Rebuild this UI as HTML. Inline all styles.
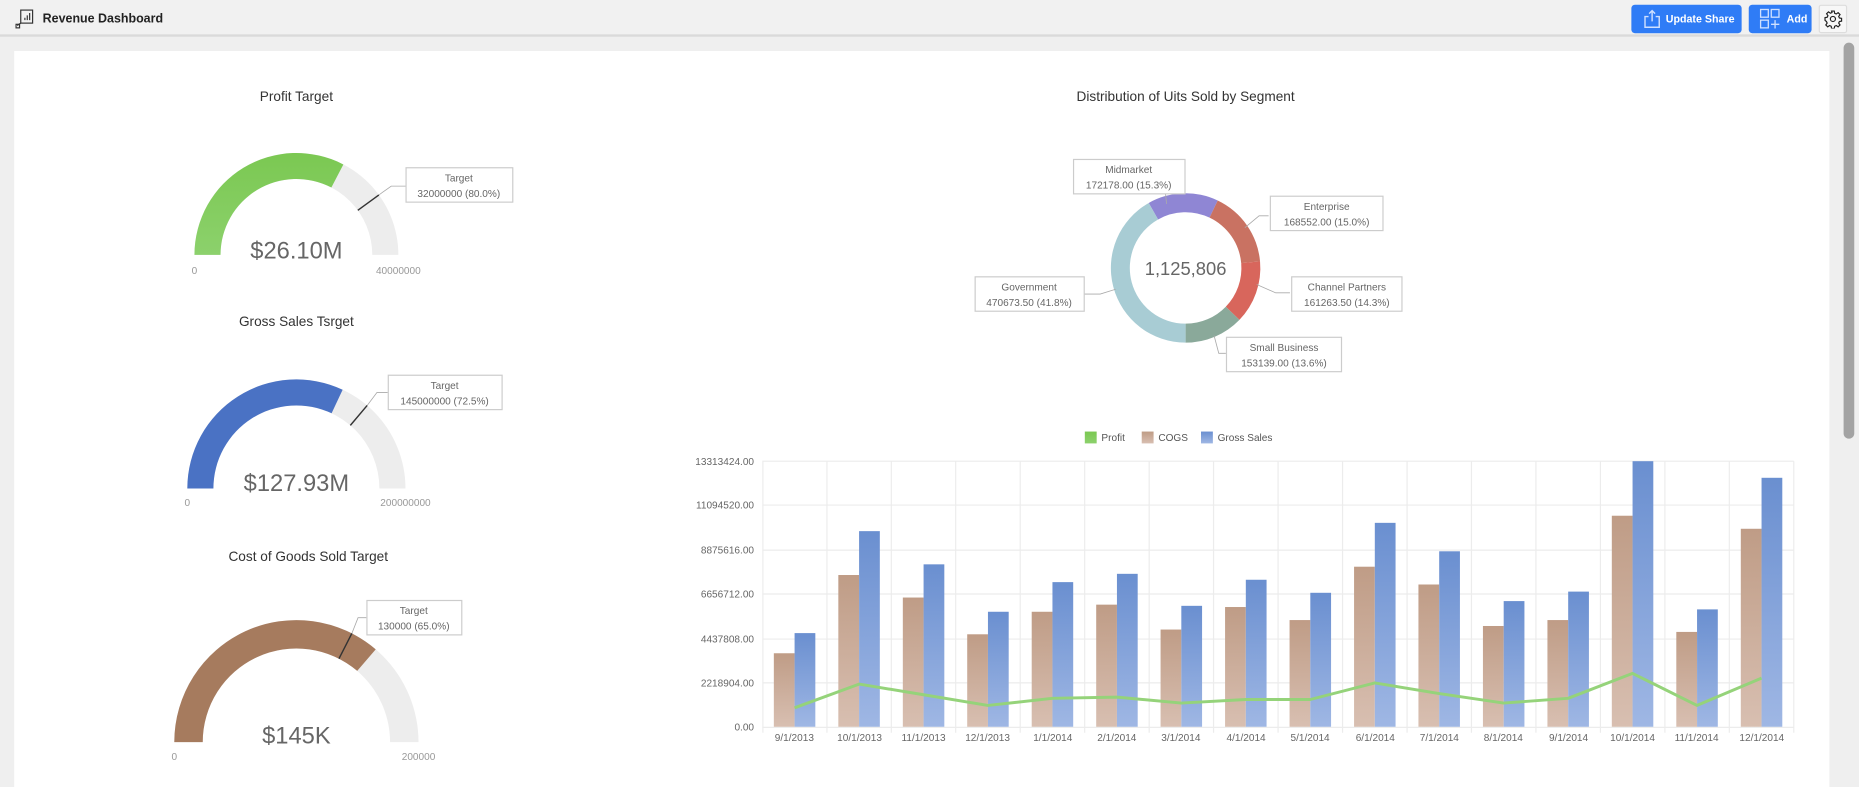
<!DOCTYPE html>
<html><head><meta charset="utf-8"><style>
html,body{margin:0;padding:0;width:1859px;height:787px;overflow:hidden;background:#efefef;font-family:"Liberation Sans",Arial,sans-serif}
#w{position:absolute;left:0;top:0;width:1568px;height:664px;transform:scale(1.18559);transform-origin:0 0;background:#efefef}
#hdr{position:absolute;left:0;top:0;width:1568px;height:31px;background:#f1f1f1;border-bottom:2px solid #dadada;box-sizing:border-box}
#title{position:absolute;left:36px;top:10px;font-size:10.5px;font-weight:bold;color:#222}
.btn{position:absolute;top:4px;height:24px;background:#2f7cf6;border-radius:3px;color:#fff;font-size:9px;font-weight:bold;line-height:24px;box-sizing:border-box;white-space:nowrap}
#panel{position:absolute;left:12px;top:43px;width:1531px;height:621px;background:#fff}
#sb{position:absolute;left:1553px;top:32px;width:13px;height:632px;background:#efefef}
#thumb{position:absolute;left:1555px;top:36px;width:9px;height:334px;background:#a3a3a3;border-radius:5px}
svg text{font-family:"Liberation Sans",Arial,sans-serif}
</style></head><body><div id="w">
<div id="hdr">
<svg style="position:absolute;left:13px;top:8px" width="16" height="16" viewBox="0 0 16 16" fill="none" stroke="#333" stroke-width="1"><rect x="4.5" y="0.5" width="10" height="11"/><path d="M8 9V7M10 9V5M12 9V3"/><path d="M4.5 11.5L1.5 13.5"/><rect x="0.5" y="12.5" width="3" height="3"/></svg>
<div id="title">Revenue Dashboard</div>
<div class="btn" style="left:1376px;width:93px;padding-left:29px">Update Share
<svg style="position:absolute;left:10px;top:4px" width="15" height="16" viewBox="0 0 15 16" fill="none" stroke="#cfe0ff" stroke-width="1.2"><path d="M4.5 6H1.5V15H13.5V6H10.5"/><path d="M7.5 10V1M5 3.5L7.5 1L10 3.5"/></svg></div>
<div class="btn" style="left:1475px;width:53px;padding-left:32px">Add
<svg style="position:absolute;left:9px;top:3px" width="18" height="18" viewBox="0 0 18 18" fill="none" stroke="#cfe0ff" stroke-width="1.1"><rect x="1" y="1" width="6.5" height="6.5"/><rect x="10" y="1" width="6.5" height="6.5"/><rect x="1" y="10" width="6.5" height="6.5"/><path d="M13.2 10V17M9.8 13.5H16.8"/></svg></div>
<div style="position:absolute;left:1534px;top:4px;width:24px;height:24px;border:1px solid #ddd;background:#f7f7f7;box-sizing:border-box;border-radius:2px">
<svg style="position:absolute;left:3px;top:3px" width="16" height="16" viewBox="0 0 24 24" fill="none" stroke="#222" stroke-width="1.5"><circle cx="12" cy="12" r="3.2"/><path d="M10.3 2h3.4l.5 2.8 2 .9 2.4-1.7 2.4 2.4-1.7 2.4.9 2 2.8.5v3.4l-2.8.5-.9 2 1.7 2.4-2.4 2.4-2.4-1.7-2 .9-.5 2.8h-3.4l-.5-2.8-2-.9-2.4 1.7-2.4-2.4 1.7-2.4-.9-2L2 13.7v-3.4l2.8-.5.9-2L4 5.4 6.4 3l2.4 1.7 2-.9z"/></svg></div>
</div>
<div id="panel"></div>
<div id="sb"></div><div id="thumb"></div>
<svg style="position:absolute;left:0;top:0" width="1568" height="664">
<defs>
<linearGradient id="gg" x1="0" y1="1" x2="0" y2="0"><stop offset="0" stop-color="#8cd16c"/><stop offset="1" stop-color="#7bc852"/></linearGradient>
<linearGradient id="cg" x1="0" y1="0" x2="0" y2="1"><stop offset="0" stop-color="#bf9c86"/><stop offset="1" stop-color="#d8bfb1"/></linearGradient>
<linearGradient id="bg" x1="0" y1="0" x2="0" y2="1"><stop offset="0" stop-color="#6a8fd0"/><stop offset="1" stop-color="#9fb7e4"/></linearGradient>
</defs>
<g font-size="11.5" fill="#333" text-anchor="middle">
<text x="250" y="85">Profit Target</text>
<text x="250" y="275">Gross Sales Tsrget</text>
<text x="260" y="473">Cost of Goods Sold Target</text>
<text x="1000" y="85">Distribution of Uits Sold by Segment</text>
</g>
<path d="M164,215 A86,86 0 0 1 336,215 L314,215 A64,64 0 0 0 186,215 Z" fill="#ededed"/>
<path d="M164,215 A86,86 0 0 1 289.6,138.7 L279.5,158.2 A64,64 0 0 0 186,215 Z" fill="url(#gg)"/>
<line x1="301.8" y1="177.4" x2="319.6" y2="164.4" stroke="#333" stroke-width="1.2"/>
<polyline points="319.6,164.4 330,157 342,157" fill="none" stroke="#aaa" stroke-width="0.7"/>
<rect x="342.5" y="141.5" width="90" height="29" fill="#fff" stroke="#ccc"/>
<g font-size="8.5" fill="#666" text-anchor="middle"><text x="387" y="153">Target</text><text x="387" y="166">32000000 (80.0%)</text></g>
<text x="250" y="218" font-size="20" fill="#666" text-anchor="middle">$26.10M</text>
<g font-size="8.5" fill="#999" text-anchor="middle"><text x="164" y="231">0</text><text x="336" y="231">40000000</text></g>
<path d="M158,412 A92,92 0 0 1 342,412 L320,412 A70,70 0 0 0 180,412 Z" fill="#ededed"/>
<path d="M158,412 A92,92 0 0 1 289,328.7 L279.7,348.6 A70,70 0 0 0 180,412 Z" fill="#4a72c4"/>
<line x1="295.5" y1="358.8" x2="309.7" y2="342" stroke="#333" stroke-width="1.2"/>
<polyline points="309.7,342 318,331 327,331" fill="none" stroke="#aaa" stroke-width="0.7"/>
<rect x="327.5" y="316.5" width="96" height="29" fill="#fff" stroke="#ccc"/>
<g font-size="8.5" fill="#666" text-anchor="middle"><text x="375" y="328">Target</text><text x="375" y="341">145000000 (72.5%)</text></g>
<text x="250" y="414" font-size="20" fill="#666" text-anchor="middle">$127.93M</text>
<g font-size="8.5" fill="#999" text-anchor="middle"><text x="158" y="427">0</text><text x="342" y="427">200000000</text></g>
<path d="M147,626 A103,103 0 0 1 353,626 L329,626 A79,79 0 0 0 171,626 Z" fill="#ededed"/>
<path d="M147,626 A103,103 0 0 1 316.9,547.7 L301.3,565.9 A79,79 0 0 0 171,626 Z" fill="#a67b5e"/>
<line x1="285.9" y1="555.6" x2="296.8" y2="534.2" stroke="#333" stroke-width="1.2"/>
<polyline points="296.8,534.2 302,521 309,521" fill="none" stroke="#aaa" stroke-width="0.7"/>
<rect x="309.5" y="506.5" width="80" height="29" fill="#fff" stroke="#ccc"/>
<g font-size="8.5" fill="#666" text-anchor="middle"><text x="349" y="518">Target</text><text x="349" y="531">130000 (65.0%)</text></g>
<text x="250" y="627" font-size="20" fill="#666" text-anchor="middle">$145K</text>
<g font-size="8.5" fill="#999" text-anchor="middle"><text x="147" y="641">0</text><text x="353" y="641">200000</text></g>
<path d="M968.9,171.2 A63,63 0 0 1 1027.1,169.1 L1020.2,183.6 A47,47 0 0 0 976.8,185.1 Z" fill="#8f86d4"/>
<path d="M1027.1,169.1 A63,63 0 0 1 1062.8,220.5 L1046.9,221.9 A47,47 0 0 0 1020.2,183.6 Z" fill="#c97262"/>
<path d="M1062.8,220.5 A63,63 0 0 1 1045.4,269.8 L1033.9,258.7 A47,47 0 0 0 1046.9,221.9 Z" fill="#d8665c"/>
<path d="M1045.4,269.8 A63,63 0 0 1 1000,289 L1000,273 A47,47 0 0 0 1033.9,258.7 Z" fill="#8aa99a"/>
<path d="M1000,289 A63,63 0 0 1 968.9,171.2 L976.8,185.1 A47,47 0 0 0 1000,273 Z" fill="#a8ccd4"/>
<text x="1000" y="232" font-size="15.5" fill="#666" text-anchor="middle">1,125,806</text>
<g fill="none" stroke="#aaa" stroke-width="0.7">
<polyline points="983,163 984,172"/>
<polyline points="1070,182 1062,182 1050,192"/>
<polyline points="1088,247 1076,247 1060,240"/>
<polyline points="1034,298 1028,298 1024,283"/>
<polyline points="914,248 928,248 941,244"/>
</g>
<g fill="#fff" stroke="#ccc">
<rect x="905.5" y="134.5" width="94" height="29"/>
<rect x="1071.5" y="165.5" width="95" height="29"/>
<rect x="1089.5" y="233.5" width="93" height="29"/>
<rect x="1034.5" y="284.5" width="97" height="29"/>
<rect x="822.5" y="233.5" width="92" height="29"/>
</g>
<g font-size="8.5" fill="#666" text-anchor="middle">
<text x="952" y="146">Midmarket</text><text x="952" y="159">172178.00 (15.3%)</text>
<text x="1119" y="177">Enterprise</text><text x="1119" y="190">168552.00 (15.0%)</text>
<text x="1136" y="245">Channel Partners</text><text x="1136" y="258">161263.50 (14.3%)</text>
<text x="1083" y="296">Small Business</text><text x="1083" y="309">153139.00 (13.6%)</text>
<text x="868" y="245">Government</text><text x="868" y="258">470673.50 (41.8%)</text>
</g>
<rect x="915" y="364" width="10" height="10" fill="url(#gg)"/><text x="929" y="372" font-size="8.5" fill="#555">Profit</text>
<rect x="963" y="364" width="10" height="10" fill="url(#cg)"/><text x="977" y="372" font-size="8.5" fill="#555">COGS</text>
<rect x="1013" y="364" width="10" height="10" fill="url(#bg)"/><text x="1027" y="372" font-size="8.5" fill="#555">Gross Sales</text>
<g stroke="#ececec" stroke-width="1">
<line x1="643" y1="389" x2="1513" y2="389"/><line x1="643" y1="426" x2="1513" y2="426"/><line x1="643" y1="464" x2="1513" y2="464"/><line x1="643" y1="501" x2="1513" y2="501"/><line x1="643" y1="539" x2="1513" y2="539"/><line x1="643" y1="576" x2="1513" y2="576"/><line x1="643" y1="613.5" x2="1513" y2="613.5"/>
<line x1="643.5" y1="389" x2="643.5" y2="618"/><line x1="697.5" y1="389" x2="697.5" y2="618"/><line x1="751.8" y1="389" x2="751.8" y2="618"/><line x1="806.1" y1="389" x2="806.1" y2="618"/><line x1="860.5" y1="389" x2="860.5" y2="618"/><line x1="914.9" y1="389" x2="914.9" y2="618"/><line x1="969.3" y1="389" x2="969.3" y2="618"/><line x1="1023.6" y1="389" x2="1023.6" y2="618"/><line x1="1078" y1="389" x2="1078" y2="618"/><line x1="1132.4" y1="389" x2="1132.4" y2="618"/><line x1="1186.8" y1="389" x2="1186.8" y2="618"/><line x1="1241.1" y1="389" x2="1241.1" y2="618"/><line x1="1295.5" y1="389" x2="1295.5" y2="618"/><line x1="1349.9" y1="389" x2="1349.9" y2="618"/><line x1="1404.3" y1="389" x2="1404.3" y2="618"/><line x1="1458.6" y1="389" x2="1458.6" y2="618"/><line x1="1513" y1="389" x2="1513" y2="618"/>
</g>
<g font-size="8.5" fill="#666" text-anchor="end">
<text x="636" y="392">13313424.00</text><text x="636" y="429">11094520.00</text><text x="636" y="467">8875616.00</text><text x="636" y="504">6656712.00</text><text x="636" y="542">4437808.00</text><text x="636" y="579">2218904.00</text><text x="636" y="616">0.00</text>
</g>
<g fill="url(#cg)">
<rect x="652.7" y="551" width="17.5" height="62"/><rect x="707.1" y="485" width="17.5" height="128"/><rect x="761.5" y="504" width="17.5" height="109"/><rect x="815.8" y="535" width="17.5" height="78"/><rect x="870.2" y="516" width="17.5" height="97"/><rect x="924.6" y="510" width="17.5" height="103"/><rect x="978.9" y="531" width="17.5" height="82"/><rect x="1033.3" y="512" width="17.5" height="101"/><rect x="1087.7" y="523" width="17.5" height="90"/><rect x="1142.1" y="478" width="17.5" height="135"/><rect x="1196.4" y="493" width="17.5" height="120"/><rect x="1250.8" y="528" width="17.5" height="85"/><rect x="1305.2" y="523" width="17.5" height="90"/><rect x="1359.5" y="435" width="17.5" height="178"/><rect x="1413.9" y="533" width="17.5" height="80"/><rect x="1468.3" y="446" width="17.5" height="167"/>
</g>
<g fill="url(#bg)">
<rect x="670.2" y="534" width="17.5" height="79"/><rect x="724.6" y="448" width="17.5" height="165"/><rect x="779" y="476" width="17.5" height="137"/><rect x="833.3" y="516" width="17.5" height="97"/><rect x="887.7" y="491" width="17.5" height="122"/><rect x="942.1" y="484" width="17.5" height="129"/><rect x="996.4" y="511" width="17.5" height="102"/><rect x="1050.8" y="489" width="17.5" height="124"/><rect x="1105.2" y="500" width="17.5" height="113"/><rect x="1159.6" y="441" width="17.5" height="172"/><rect x="1213.9" y="465" width="17.5" height="148"/><rect x="1268.3" y="507" width="17.5" height="106"/><rect x="1322.7" y="499" width="17.5" height="114"/><rect x="1377" y="389" width="17.5" height="224"/><rect x="1431.4" y="514" width="17.5" height="99"/><rect x="1485.8" y="403" width="17.5" height="210"/>
</g>
<polyline fill="none" stroke="#95d37a" stroke-width="2.5" stroke-linejoin="round" points="670.2,597 724.6,577 779,586 833.3,595 887.7,589 942.1,588 996.4,593 1050.8,590 1105.2,590 1159.6,576 1213.9,585 1268.3,593 1322.7,589 1377,568 1431.4,595 1485.8,572"/>
<g font-size="8.5" fill="#666" text-anchor="middle">
<text x="670" y="625">9/1/2013</text><text x="725" y="625">10/1/2013</text><text x="779" y="625">11/1/2013</text><text x="833" y="625">12/1/2013</text><text x="888" y="625">1/1/2014</text><text x="942" y="625">2/1/2014</text><text x="996" y="625">3/1/2014</text><text x="1051" y="625">4/1/2014</text><text x="1105" y="625">5/1/2014</text><text x="1160" y="625">6/1/2014</text><text x="1214" y="625">7/1/2014</text><text x="1268" y="625">8/1/2014</text><text x="1323" y="625">9/1/2014</text><text x="1377" y="625">10/1/2014</text><text x="1431" y="625">11/1/2014</text><text x="1486" y="625">12/1/2014</text>
</g>
</svg>
</div></body></html>
